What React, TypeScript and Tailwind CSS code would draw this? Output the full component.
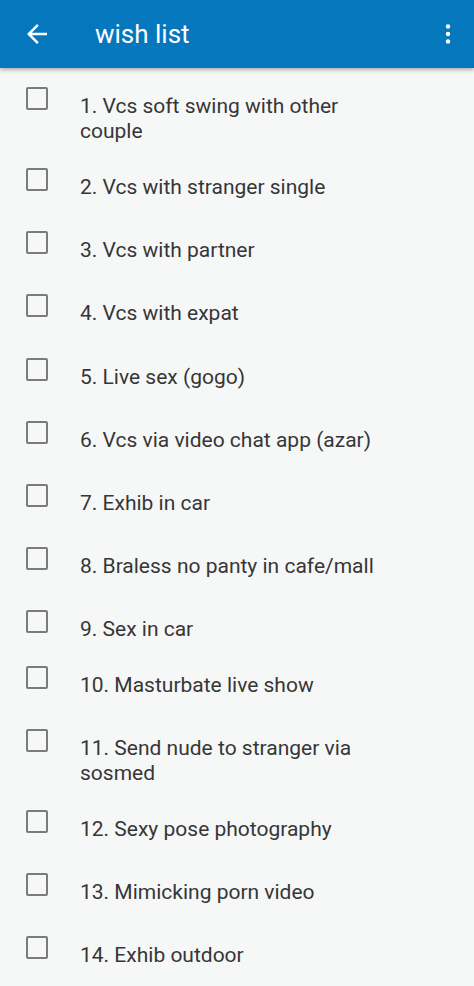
import { useState } from 'react';

const items = [
  { text: '1. Vcs soft swing with other couple', h: 'h-[81px]' },
  { text: '2. Vcs with stranger single', h: 'h-[63px]' },
  { text: '3. Vcs with partner', h: 'h-[63px]' },
  { text: '4. Vcs with expat', h: 'h-[64px]' },
  { text: '5. Live sex (gogo)', h: 'h-[63px]' },
  { text: '6. Vcs via video chat app (azar)', h: 'h-[63px]' },
  { text: '7. Exhib in car', h: 'h-[63px]' },
  { text: '8. Braless no panty in cafe/mall', h: 'h-[63px]' },
  { text: '9. Sex in car', h: 'h-[56px]' },
  { text: '10. Masturbate live show', h: 'h-[63px]' },
  { text: '11. Send nude to stranger via sosmed', h: 'h-[81px]' },
  { text: '12. Sexy pose photography', h: 'h-[63px]' },
  { text: '13. Mimicking porn video', h: 'h-[63px]' },
  { text: '14. Exhib outdoor', h: 'h-[50px]' },
];

const App = () => {
  const [checked, setChecked] = useState<boolean[]>(items.map(() => false));

  const toggle = (i: number) => {
    setChecked((prev) => prev.map((c, idx) => (idx === i ? !c : c)));
  };

  return (
    <div className="w-[474px] h-[986px] overflow-hidden bg-[#f6f8f8] font-['Roboto',sans-serif]">
      {/* toolbar */}
      <div className="relative z-10 h-[68px] bg-[#0577bd] flex items-center shadow-[0_2px_4px_rgba(0,0,0,0.3)]">
        <div className="w-[95px] flex justify-start pl-[22px]">
          <svg width="30" height="30" viewBox="0 0 24 24" fill="white">
            <path d="M20 11H7.83l5.59-5.59L12 4l-8 8 8 8 1.41-1.41L7.83 13H20v-2z" />
          </svg>
        </div>
        <div className="flex-1 text-white text-[26px] leading-none pb-[1px]">wish list</div>
        <div className="w-[44px] flex justify-center pr-[8px]">
          <svg width="24" height="24" viewBox="0 0 24 24" fill="white">
            <circle cx="12" cy="4.5" r="2.2" />
            <circle cx="12" cy="12" r="2.2" />
            <circle cx="12" cy="19.5" r="2.2" />
          </svg>
        </div>
      </div>

      {/* list */}
      <div className="flex flex-col">
        {items.map((item, i) => (
          <div key={i} className={`${item.h} flex pt-[19px] cursor-pointer`} onClick={() => toggle(i)}>
            <div className="w-[80px] pl-[26px] shrink-0">
              <div className="w-[22px] h-[23px] border-[2.5px] border-[#7b7b7b] rounded-[2px] flex items-center justify-center">
                {checked[i] && <span className="text-[#0577bd] text-[16px] leading-none">✓</span>}
              </div>
            </div>
            <div className="pt-[7px] pr-[100px] text-[21px] leading-[25px] text-[#363636]">{item.text}</div>
          </div>
        ))}
      </div>
    </div>
  );
};

export default App;
